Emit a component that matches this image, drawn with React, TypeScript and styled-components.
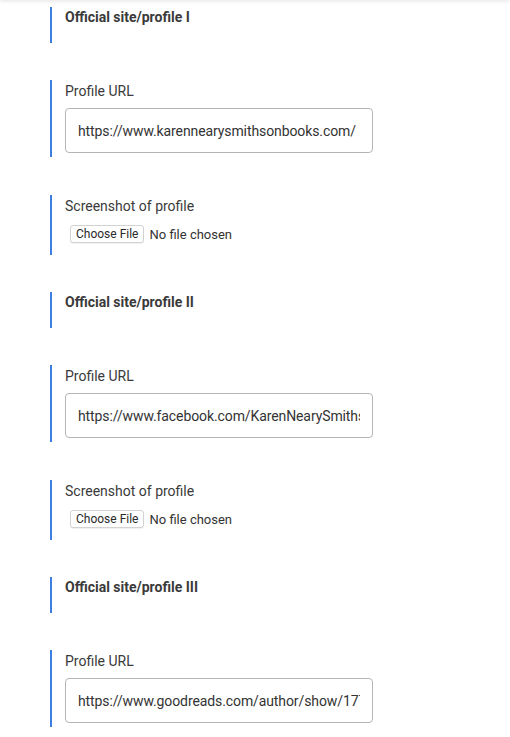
import React from "react";
import styled, { createGlobalStyle } from "styled-components";

const GlobalStyle = createGlobalStyle`
  html, body {
    margin: 0;
    padding: 0;
    background: #ffffff;
  }
  body {
    font-family: Roboto, "Liberation Sans", Arial, sans-serif;
    color: #333333;
  }
`;

const Page = styled("div")`
  position: relative;
  padding: 7px 0 0 50px;
  &::before {
    content: "";
    position: absolute;
    left: 0;
    right: 0;
    top: -4px;
    height: 4px;
    box-shadow: 0 1px 4px rgba(0, 0, 0, 0.12);
  }
`;

const Block = styled("div")<{ $height: number; $gap?: number }>`
  display: flex;
  flex-direction: column;
  align-items: flex-start;
  box-sizing: border-box;
  height: ${(p) => p.$height}px;
  border-left: 2px solid #3d7fe0;
  padding: 0 0 0 13px;
  margin-bottom: ${(p) => p.$gap ?? 37}px;
`;

const Heading = styled("div")`
  font-size: 14px;
  font-weight: 700;
  line-height: 18px;
  color: #3a3a3a;
  margin-top: 1px;
`;

const Label = styled("label")`
  font-size: 14px;
  line-height: 20px;
  color: #3a3a3a;
  margin-top: 1px;
`;

const UrlInput = styled("input")`
  box-sizing: border-box;
  width: 308px;
  height: 45px;
  margin-top: 7px;
  padding: 0 12px;
  border: 1px solid #b5b5b5;
  border-radius: 4px;
  font-family: Roboto, "Liberation Sans", Arial, sans-serif;
  font-size: 14px;
  letter-spacing: -0.1px;
  color: #333333;
  background: #ffffff;
  outline: none;
`;

const FileRow = styled("div")`
  display: flex;
  align-items: center;
  gap: 5px;
  margin: 9px 0 0 5px;
`;

const FileButton = styled("button")`
  box-sizing: border-box;
  height: 18px;
  padding: 0 5px;
  border: 1px solid #d2d2d2;
  border-radius: 3px;
  background: #ffffff;
  font-family: Roboto, "Liberation Sans", Arial, sans-serif;
  font-size: 12px;
  line-height: 16px;
  color: #2a2a2a;
  box-shadow: 0 1px 1px rgba(0, 0, 0, 0.06);
`;

const FileStatus = styled("span")`
  font-size: 13px;
  line-height: 17px;
  color: #333333;
`;

const profiles = [
  { title: "Official site/profile I", url: "https://www.karennearysmithsonbooks.com/", file: true },
  { title: "Official site/profile II", url: "https://www.facebook.com/KarenNearySmithsonBooks", file: true },
  { title: "Official site/profile III", url: "https://www.goodreads.com/author/show/17743.Karen_Neary_Smithson", file: false },
];

export default function App() {
  return (
    <>
      <GlobalStyle />
      <Page>
        {profiles.map((p) => (
          <React.Fragment key={p.title}>
            <Block $height={36}>
              <Heading>{p.title}</Heading>
            </Block>
            <Block $height={77} $gap={38}>
              <Label>Profile URL</Label>
              <UrlInput type="text" defaultValue={p.url} readOnly />
            </Block>
            {p.file && (
              <Block $height={60}>
                <Label>Screenshot of profile</Label>
                <FileRow>
                  <FileButton type="button">Choose File</FileButton>
                  <FileStatus>No file chosen</FileStatus>
                </FileRow>
              </Block>
            )}
          </React.Fragment>
        ))}
      </Page>
    </>
  );
}
